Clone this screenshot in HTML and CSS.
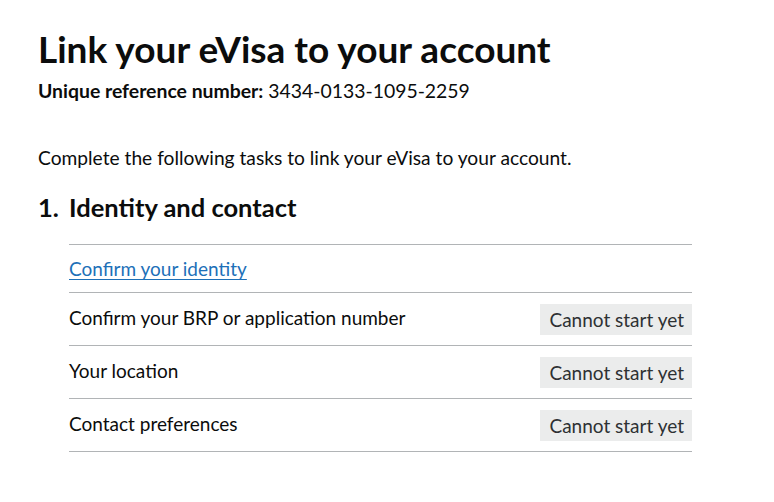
FILE: index.html
```html
<!DOCTYPE html>
<html lang="en">
<head>
<meta charset="utf-8">
<title>Link your eVisa to your account</title>
<link rel="stylesheet" href="styles.css">
</head>
<body>
<main class="page">
  <h1 class="title">Link your eVisa to your account</h1>
  <p class="ref"><strong>Unique reference number:</strong> 3434-0133-1095-2259</p>
  <p class="intro">Complete the following tasks to link your eVisa to your account.</p>
  <h2 class="section"><span class="num">1.</span><span>Identity and contact</span></h2>
  <ul class="tasks">
    <li class="task task-first"><a class="task-link" href="#">Confirm your identity</a></li>
    <li class="task"><span class="task-name">Confirm your BRP or application number</span><span class="tag">Cannot start yet</span></li>
    <li class="task"><span class="task-name">Your location</span><span class="tag">Cannot start yet</span></li>
    <li class="task"><span class="task-name">Contact preferences</span><span class="tag">Cannot start yet</span></li>
  </ul>
</main>
</body>
</html>
```

FILE: styles.css
```css
html, body {
  margin: 0;
  padding: 0;
  background: #ffffff;
}
body {
  font-family: Lato, "Liberation Sans", sans-serif;
  color: #0b0c0c;
}
.page {
  padding: 24px 0 0 38px;
  width: 654px;
}
.title {
  font-size: 37px;
  line-height: 50px;
  font-weight: 700;
  margin: 0;
}
.ref {
  font-size: 19.4px;
  line-height: 25px;
  margin: 4px 0 0;
}
.ref strong {
  font-weight: 700;
}
.intro {
  font-size: 19.2px;
  line-height: 25px;
  margin: 42px 0 0;
}
.section {
  display: flex;
  font-size: 25.5px;
  line-height: 30px;
  font-weight: 700;
  margin: 22px 0 0;
}
.num {
  width: 31px;
  flex: none;
}
.tasks {
  list-style: none;
  margin: 22px 0 0 31px;
  padding: 0;
  border-top: 1px solid #b1b4b6;
}
.task {
  display: flex;
  align-items: center;
  justify-content: space-between;
  min-height: 52px;
  border-bottom: 1px solid #b1b4b6;
  font-size: 19px;
  line-height: 25px;
}
.task-first {
  min-height: 47px;
}
.task-name {
  padding-bottom: 4px;
}
.task-link {
  color: #1d70b8;
  text-decoration: underline;
  text-underline-offset: 3px;
  text-decoration-thickness: 1px;
}
.tag {
  background: #ebecec;
  color: #2e3133;
  padding: 3px 8px 3px 9px;
  line-height: 25px;
}
```
